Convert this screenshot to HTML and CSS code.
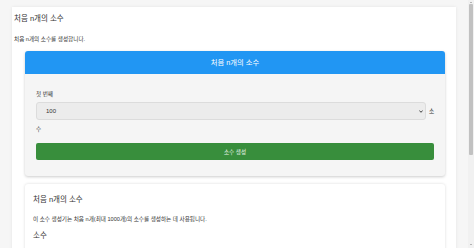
FILE: index.html
```html
<!DOCTYPE html>
<html lang="ko">
<head>
<meta charset="utf-8">
<title>처음 n개의 소수</title>
<link rel="stylesheet" href="styles.css">
</head>
<body>
<div class="page">
  <h1 class="title">처음 n개의 소수</h1>
  <p class="lead">처음 n개의 소수를 생성합니다.</p>
  <div class="tool">
    <div class="tool-head">처음 n개의 소수</div>
    <div class="tool-body">
      <label class="field-label">첫 번째</label>
      <div class="select-row"><span class="sel-wrap"><select class="sel"><option>100</option></select><svg class="chev" viewBox="0 0 4 3"><path d="M0.4 0.5 L2 2.3 L3.6 0.5" fill="none" stroke="#333" stroke-width="0.9"/></svg></span>소수</div>
      <button class="btn">소수 생성</button>
    </div>
  </div>
  <div class="info">
    <h2 class="info-title">처음 n개의 소수</h2>
    <p class="info-text">이 소수 생성기는 처음 n개(최대 1000개)의 소수를 생성하는 데 사용됩니다.</p>
    <h3 class="info-sub">소수</h3>
  </div>
</div>
<div class="scrollbar" aria-hidden="true">
  <span class="sb-arrow sb-up"></span>
  <span class="sb-thumb"></span>
  <span class="sb-arrow sb-down"></span>
</div>
</body>
</html>
```

FILE: styles.css
```css
html {
  background: #f6f6f6;
}
body {
  margin: 0;
  padding: 7px 18px 7px 12px;
  font-family: "Liberation Sans", "Noto Sans CJK KR", sans-serif;
  color: #333;
}
.scrollbar {
  position: fixed;
  top: 0;
  right: 0;
  width: 6px;
  height: 100vh;
  background: #f1f1f1;
  display: flex;
  flex-direction: column;
  align-items: center;
}
.sb-thumb {
  width: 4px;
  height: 151px;
  margin-top: 1px;
  background: #c1c1c1;
  border-radius: 1px;
}
.sb-arrow {
  width: 0;
  height: 0;
  border-left: 1.5px solid transparent;
  border-right: 1.5px solid transparent;
}
.sb-up {
  margin-top: 2px;
  border-bottom: 1.5px solid #777;
}
.sb-down {
  margin-top: auto;
  margin-bottom: 3px;
  border-top: 1.5px solid #777;
}
.page {
  background: #fff;
  box-shadow: 0 0 3px rgba(0, 0, 0, 0.08);
  padding: 5px 11px 7px 2px;
}
.title {
  margin: 0;
  font-size: 7.5px;
  line-height: 14px;
  font-weight: 400;
}
.lead {
  margin: 8.5px 0 0;
  font-size: 5.6px;
  line-height: 9px;
}
.tool {
  margin: 7.5px 0 0 11px;
  background: #f5f5f5;
  border-radius: 3px;
  box-shadow: 0 1px 3px rgba(0, 0, 0, 0.2);
}
.tool-head {
  height: 23px;
  line-height: 23px;
  background: #2196f3;
  color: #fff;
  text-align: center;
  font-size: 7.3px;
  border-radius: 3px 3px 0 0;
}
.tool-body {
  padding: 16px 10px 16px 11px;
}
.field-label {
  display: block;
  font-size: 5.6px;
  line-height: 9px;
  margin-bottom: 3px;
}
.select-row {
  font-size: 5.6px;
  line-height: 18px;
}
.sel-wrap {
  position: relative;
  display: inline-block;
  vertical-align: top;
  margin-right: 3px;
}
.sel {
  display: block;
  -webkit-appearance: none;
  appearance: none;
  width: 390px;
  height: 18px;
  margin: 0;
  border: 1px solid #dcdcdc;
  border-radius: 3px;
  background: #ececec;
  padding: 0 9px;
  font-family: "Liberation Sans", sans-serif;
  font-size: 6px;
  color: #333;
}
.chev {
  position: absolute;
  right: 3px;
  top: 8px;
  width: 4px;
  height: 3px;
}
.btn {
  display: block;
  width: calc(100% - 1px);
  height: 17px;
  margin: 5px 0 0;
  border: 0;
  border-radius: 2px;
  background: #388e3c;
  color: #e8f5e9;
  font-family: inherit;
  font-size: 5.6px;
  padding: 0;
}
.info {
  box-sizing: border-box;
  min-height: 196px;
  margin: 8px 0 0 11px;
  background: #fff;
  border-radius: 3px;
  box-shadow: 0 0 3px rgba(0, 0, 0, 0.15);
  padding: 8.5px 8px;
}
.info-title {
  margin: 0;
  font-size: 7.5px;
  line-height: 13px;
  font-weight: 400;
}
.info-text {
  margin: 9px 0 0;
  font-size: 5.6px;
  line-height: 9px;
}
.info-sub {
  margin: 5.5px 0 0;
  font-size: 7.5px;
  line-height: 13px;
  font-weight: 400;
}
```
